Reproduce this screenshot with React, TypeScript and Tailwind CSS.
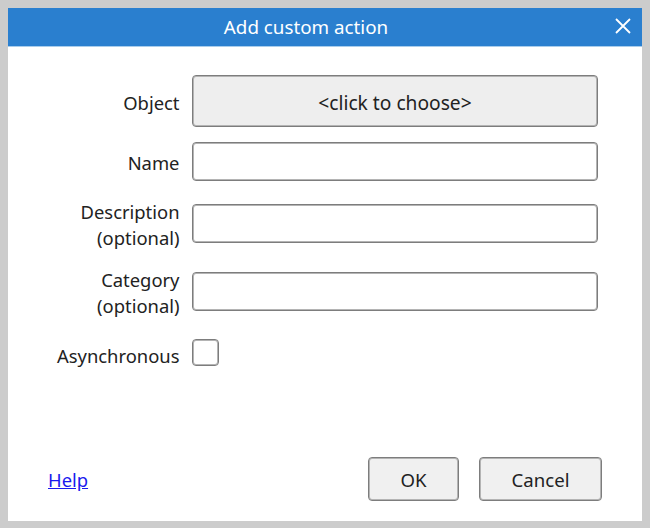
import React from "react";

function Row({ label, className, labelClass, children }: { label: React.ReactNode; className: string; labelClass: string; children: React.ReactNode }) {
  return (
    <div className={`flex items-start ${className}`}>
      <div className={`w-[172px] pr-[0.5px] text-right leading-[26px] text-[#222222] ${labelClass}`}>{label}</div>
      <div className="ml-[12px]">{children}</div>
    </div>
  );
}

const edge = "rounded-[4px] border border-[#7d7d7d] shadow-[inset_0_0_0_1px_#b4b4b4]";
const inputCls = `block w-[406px] h-[39px] ${edge} bg-white`;

export default function App() {
  return (
    <div className="w-[650px] h-[528px] bg-[#cccccc] p-[8px] pb-[7px]" style={{ fontFamily: '"Noto Sans", "Open Sans", sans-serif' }}>
      <div className="w-[634px] h-[513px] bg-white flex flex-col text-[18.4px]">
        <div className="h-[39px] shrink-0 relative flex items-center justify-center pr-[38px] bg-[#2a7fcf] border-b border-[#a9cdec] text-white">
          <span className="text-[18.8px] leading-[24px]">Add custom action</span>
          <svg className="absolute right-[11px] top-[10px]" width="16" height="16" viewBox="0 0 16 16" fill="none" stroke="white" strokeWidth="1.8">
            <path d="M1 1 L15 15 M15 1 L1 15" />
          </svg>
        </div>
        <Row label="Object" className="mt-[28px]" labelClass="pt-[15px]">
          <button className={`block w-[406px] h-[52px] pt-[3px] ${edge} bg-[#eeeeee] text-[#222222] text-[19.2px] leading-[24px]`}>&lt;click to choose&gt;</button>
        </Row>
        <Row label="Name" className="mt-[15px]" labelClass="pt-[8px]">
          <div className={inputCls} />
        </Row>
        <Row label={<>Description<br />(optional)</>} className="mt-[16px]" labelClass="pt-[2px]">
          <div className={`${inputCls} mt-[7px]`} />
        </Row>
        <Row label={<>Category<br />(optional)</>} className="mt-[14px]" labelClass="pt-[2px]">
          <div className={`${inputCls} mt-[7px]`} />
        </Row>
        <Row label="Asynchronous" className="mt-[20px]" labelClass="pt-[4px]">
          <div className={`w-[27px] h-[27px] ${edge} bg-white`} />
        </Row>
        <div className="flex items-center mt-[88px] px-[40px]">
          <a className="text-[#1a1aee] underline leading-[24px] pt-[2px]" href="#">Help</a>
          <button className={`ml-auto w-[91px] h-[44px] pt-[2px] ${edge} bg-[#f0f0f0] text-[#222222] text-[18.6px]`}>OK</button>
          <button className={`ml-[20px] w-[123px] h-[44px] pt-[2px] ${edge} bg-[#f0f0f0] text-[#222222] text-[18.6px]`}>Cancel</button>
        </div>
      </div>
    </div>
  );
}
